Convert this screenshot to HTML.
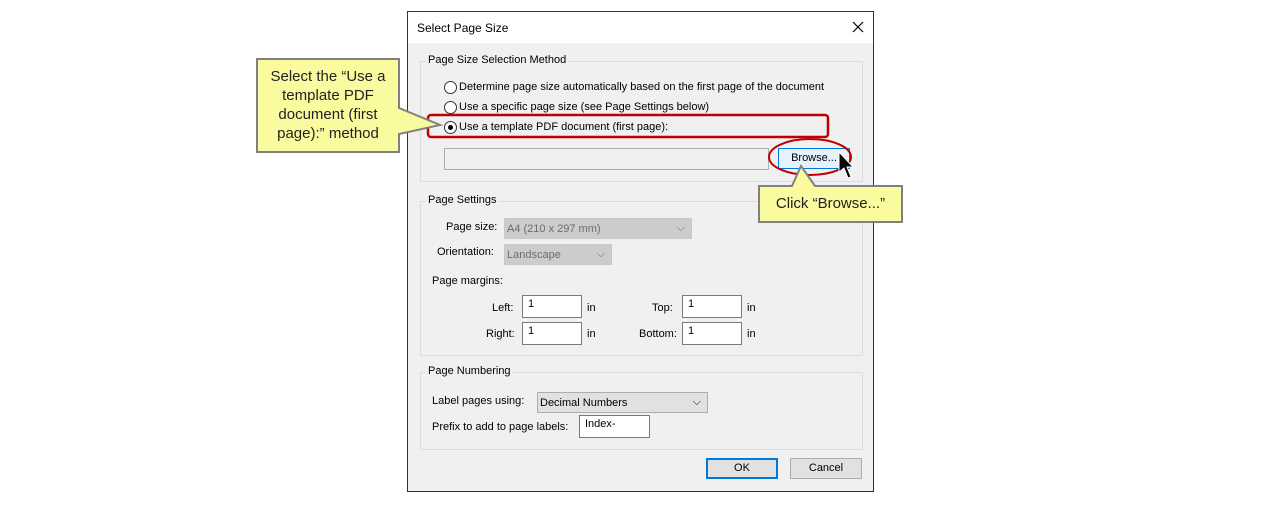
<!DOCTYPE html>
<html><head><meta charset="utf-8"><style>
body{margin:0;width:1280px;height:509px;background:#fff;position:relative;overflow:hidden;font-family:"Liberation Sans",sans-serif;font-size:11px;color:#000}
.a{position:absolute}
.dlg{left:407px;top:11px;width:465px;height:479px;border:1px solid #333;background:#f0f0f0}
.tb{left:0;top:0;width:465px;height:31px;background:#fff}
.grp{position:absolute;border:1px solid #dcdcdc}
.lg{position:absolute;background:#f0f0f0;padding:0 2px;top:-8px;left:5px}
.rad{position:absolute;width:11px;height:11px;border:1px solid #333;border-radius:50%;background:#fff}
.in{position:absolute;background:#fff;border:1px solid #7a7a7a;box-sizing:border-box;padding:2px 5px}
.dd{position:absolute;background:#ccc;border:1px solid #c8c8c8;box-sizing:border-box;color:#6d6d6d;padding:4px 2px}
.btn{position:absolute;background:#e1e1e1;border:1px solid #adadad;box-sizing:border-box;text-align:center;line-height:18px}
</style></head><body>
<div class="a dlg">
 <div class="a tb"><span class="a" style="left:9px;top:9px;font-size:12px">Select Page Size</span>
 <svg class="a" style="left:444px;top:9px" width="12" height="12"><path d="M1 1L11 11M11 1L1 11" stroke="#000" stroke-width="1.2"/></svg></div>
 <div class="grp" style="left:12px;top:49px;width:441px;height:119px"><span class="lg">Page Size Selection Method</span></div>
 <div class="rad" style="left:36px;top:69px"></div><span class="a" style="left:51px;top:69px">Determine page size automatically based on the first page of the document</span>
 <div class="rad" style="left:36px;top:89px"></div><span class="a" style="left:51px;top:89px">Use a specific page size (see Page Settings below)</span>
 <div class="rad" style="left:36px;top:109px"><div class="a" style="left:3px;top:3px;width:5px;height:5px;border-radius:50%;background:#000"></div></div><span class="a" style="left:51px;top:109px">Use a template PDF document (first page):</span>
 <div class="a" style="left:36px;top:136px;width:323px;height:20px;background:#f0f0f0;border:1px solid #adadad"></div>
 <div class="btn" style="left:370px;top:136px;width:72px;height:21px;background:#e5f1fb;border-color:#0078d7">Browse...</div>
 <div class="grp" style="left:12px;top:189px;width:441px;height:153px"><span class="lg">Page Settings</span></div>
 <span class="a" style="left:38px;top:209px">Page size:</span>
 <div class="dd" style="left:96px;top:206px;width:188px;height:21px">A4 (210 x 297 mm)<span style="position:absolute;right:6px;top:3px">⌵</span></div>
 <span class="a" style="left:29px;top:234px">Orientation:</span>
 <div class="dd" style="left:96px;top:232px;width:108px;height:21px">Landscape<span style="position:absolute;right:6px;top:3px">⌵</span></div>
 <span class="a" style="left:24px;top:263px">Page margins:</span>
 <span class="a" style="left:84px;top:290px">Left:</span><div class="in" style="left:114px;top:283px;width:60px;height:23px">1</div><span class="a" style="left:179px;top:290px">in</span>
 <span class="a" style="left:244px;top:290px">Top:</span><div class="in" style="left:274px;top:283px;width:60px;height:23px">1</div><span class="a" style="left:339px;top:290px">in</span>
 <span class="a" style="left:78px;top:316px">Right:</span><div class="in" style="left:114px;top:310px;width:60px;height:23px">1</div><span class="a" style="left:179px;top:316px">in</span>
 <span class="a" style="left:231px;top:316px">Bottom:</span><div class="in" style="left:274px;top:310px;width:60px;height:23px">1</div><span class="a" style="left:339px;top:316px">in</span>
 <div class="grp" style="left:12px;top:360px;width:441px;height:76px"><span class="lg">Page Numbering</span></div>
 <span class="a" style="left:24px;top:383px">Label pages using:</span>
 <div class="dd" style="left:129px;top:380px;width:171px;height:21px;background:#e1e1e1;border-color:#adadad;color:#000">Decimal Numbers<span style="position:absolute;right:6px;top:3px">⌵</span></div>
 <span class="a" style="left:24px;top:409px">Prefix to add to page labels:</span>
 <div class="in" style="left:171px;top:403px;width:71px;height:23px">Index-</div>
 <div class="btn" style="left:298px;top:446px;width:72px;height:21px;border:2px solid #0078d7;line-height:17px">OK</div>
 <div class="btn" style="left:382px;top:446px;width:72px;height:21px">Cancel</div>
</div>
<svg class="a" style="left:0;top:0" width="1280" height="509">
 <rect x="428" y="115" width="400" height="22" rx="3" fill="none" stroke="#c00000" stroke-width="2.5"/>
 <ellipse cx="810" cy="157" rx="41" ry="18" fill="none" stroke="#c00000" stroke-width="2"/>
 <path d="M257 59H399V108L440 125L399 134V152H257Z" fill="#fafa9e" stroke="#808080" stroke-width="2"/>
 <path d="M759 186H792L801 166L815 186H902V222H759Z" fill="#fafa9e" stroke="#808080" stroke-width="2"/>
 <path d="M839 152V172L844 168L848 178L851 177L847 167H853Z" fill="#000" stroke="#fff" stroke-width="1"/>
</svg>
<div class="a" style="left:257px;top:67px;width:142px;text-align:center;font-size:15px;line-height:19px;color:#222">Select the “Use a<br>template PDF<br>document (first<br>page):” method</div>
<div class="a" style="left:759px;top:195px;width:143px;text-align:center;font-size:15px;color:#222">Click “Browse...”</div>
</body></html>
